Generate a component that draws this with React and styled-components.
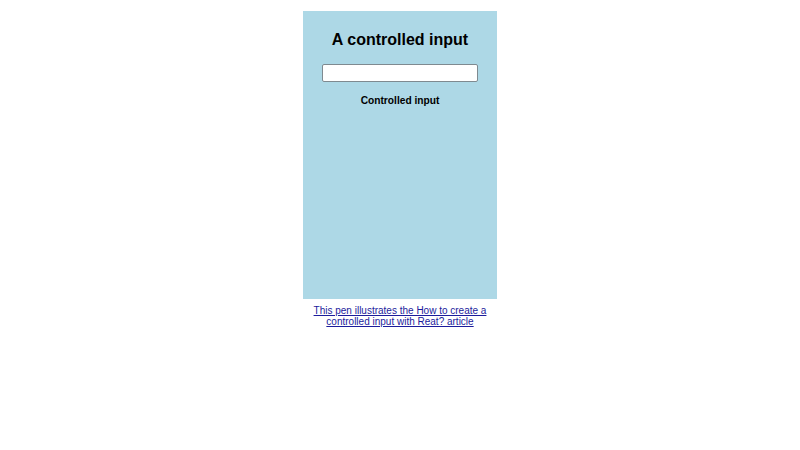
import React, { useState } from "react";
import styled, { createGlobalStyle } from "styled-components";

const GlobalStyle = createGlobalStyle`
    body {
        margin: 0;
        background: #fff;
        font-family: "Liberation Sans", Arial, sans-serif;
    }
`

const Page = styled.div`
    display: flex;
    flex-direction: column;
    align-items: center;
    padding-top: 11px;
`

const Panel = styled.div`
    width: 194px;
    height: 288px;
    background: lightblue;
    display: flex;
    flex-direction: column;
    align-items: center;
    box-sizing: border-box;
    padding-top: 19px;
`

const Title = styled.h1`
    margin: 0;
    font-size: 16px;
    line-height: 19px;
    font-weight: bold;
    color: #000;
`

const TextInput = styled.input`
    margin-top: 15px;
    width: 156px;
    height: 18px;
    box-sizing: border-box;
    border: 1px solid #7f8a90;
    border-radius: 2px;
    background: #fff;
    padding: 1px 2px;
    font-size: 11px;
`

const Label = styled.p`
    margin: 13px 0 0;
    font-size: 10.2px;
    font-weight: bold;
    color: #000;
`

const Note = styled.a`
    display: block;
    width: 194px;
    margin-top: 6px;
    text-align: center;
    font-size: 10px;
    line-height: 11px;
    color: #1c1c9c;
    text-decoration: underline;
`

const App = () => {
    const [value, setValue] = useState("");

    return (
        <Page>
            <GlobalStyle />
            <Panel>
                <Title>A controlled input</Title>
                <TextInput value={value} onChange={(e) => setValue(e.target.value)} />
                <Label>{value || "Controlled input"}</Label>
            </Panel>
            <Note href="#">This pen illustrates the How to create a controlled input with Reat? article</Note>
        </Page>
    );
}

export default App;
